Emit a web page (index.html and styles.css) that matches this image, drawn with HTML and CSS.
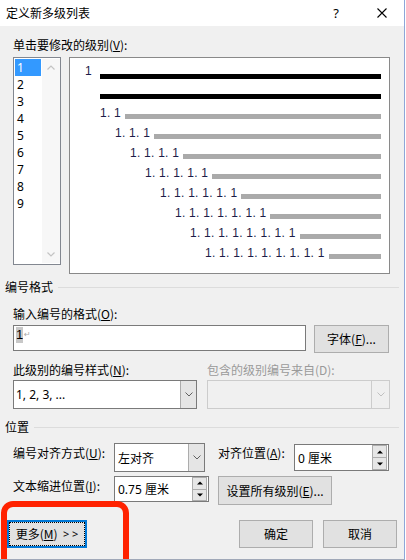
FILE: index.html
```
<!DOCTYPE html>
<html lang="zh-CN">
<head>
<meta charset="utf-8">
<title>定义新多级列表</title>
<link rel="stylesheet" href="styles.css">
</head>
<body>
<div class="dialog">
  <div class="titlebar">
    <span class="tb-title">定义新多级列表</span>
    <span class="tb-help">?</span>
    <span class="tb-close"><svg width="10" height="10" viewBox="0 0 10 10"><path d="M0.5 0.5L9.5 9.5M9.5 0.5L0.5 9.5" stroke="#000" stroke-width="1.1" fill="none"/></svg></span>
  </div>

  <div class="lbl first">单击要修改的级别(<u>V</u>):</div>

  <div class="list-row">
    <div class="levels">
      <div class="lv-items">
        <div class="lv sel">1</div>
        <div class="lv">2</div>
        <div class="lv">3</div>
        <div class="lv">4</div>
        <div class="lv">5</div>
        <div class="lv">6</div>
        <div class="lv">7</div>
        <div class="lv">8</div>
        <div class="lv">9</div>
      </div>
      <div class="lv-scroll">
        <svg width="8" height="5" viewBox="0 0 8 5"><path d="M0.5 4.5L4 1L7.5 4.5" stroke="#c4c4c4" stroke-width="1.2" fill="none"/></svg>
        <svg width="8" height="5" viewBox="0 0 8 5"><path d="M0.5 0.5L4 4L7.5 0.5" stroke="#c4c4c4" stroke-width="1.2" fill="none"/></svg>
      </div>
    </div>
    <div class="preview">
      <div class="pv-row"><span class="pv-num n1">1</span><span class="bar k"></span></div>
      <div class="pv-row cont"><span class="bar k"></span></div>
      <div class="pv-row lv2"><span class="pv-num">1. 1</span><span class="bar"></span></div>
      <div class="pv-row lv3"><span class="pv-num">1. 1. 1</span><span class="bar"></span></div>
      <div class="pv-row lv4"><span class="pv-num">1. 1. 1. 1</span><span class="bar"></span></div>
      <div class="pv-row lv5"><span class="pv-num">1. 1. 1. 1. 1</span><span class="bar"></span></div>
      <div class="pv-row lv6"><span class="pv-num">1. 1. 1. 1. 1. 1</span><span class="bar"></span></div>
      <div class="pv-row lv7"><span class="pv-num">1. 1. 1. 1. 1. 1. 1</span><span class="bar"></span></div>
      <div class="pv-row lv8"><span class="pv-num">1. 1. 1. 1. 1. 1. 1. 1</span><span class="bar"></span></div>
      <div class="pv-row lv9"><span class="pv-num">1. 1. 1. 1. 1. 1. 1. 1. 1</span><span class="bar"></span></div>
    </div>
  </div>

  <div class="sec sec1"><span class="sec-title">编号格式</span><span class="sec-line"></span></div>

  <div class="lbl in-lbl">输入编号的格式(<u>O</u>):</div>
  <div class="input-row">
    <div class="textbox"><span class="hl">1</span><span class="ret">↵</span></div>
    <div class="btn font-btn">字体(<u>F</u>)...</div>
  </div>

  <div class="lbl2-row">
    <span class="c1">此级别的编号样式(<u>N</u>):</span>
    <span class="c2 dis">包含的级别编号来自(D):</span>
  </div>
  <div class="combo-row">
    <div class="combo style-combo">
      <span class="combo-text latin">1, 2, 3, ...</span>
      <span class="combo-btn"><svg width="8" height="5" viewBox="0 0 8 5"><path d="M0.5 0.5L4 4L7.5 0.5" stroke="#606060" stroke-width="1" fill="none"/></svg></span>
    </div>
    <div class="combo dis-combo">
      <span class="combo-text"></span>
      <span class="combo-btn"><svg width="8" height="5" viewBox="0 0 8 5"><path d="M0.5 0.5L4 4L7.5 0.5" stroke="#c0c0c0" stroke-width="1" fill="none"/></svg></span>
    </div>
  </div>

  <div class="sec sec2"><span class="sec-title">位置</span><span class="sec-line"></span></div>

  <div class="pos-row r1">
    <span class="plbl">编号对齐方式(<u>U</u>):</span>
    <div class="combo align-combo">
      <span class="combo-text">左对齐</span>
      <span class="combo-btn"><svg width="8" height="5" viewBox="0 0 8 5"><path d="M0.5 0.5L4 4L7.5 0.5" stroke="#606060" stroke-width="1" fill="none"/></svg></span>
    </div>
    <span class="plbl2">对齐位置(<u>A</u>):</span>
    <div class="spin pos-spin">
      <span class="spin-text">0 厘米</span>
      <span class="spin-btns">
        <span class="sb"><svg width="6" height="4" viewBox="0 0 6 4"><path d="M0 3.5L3 0.5L6 3.5Z" fill="#000"/></svg></span>
        <span class="sb"><svg width="6" height="4" viewBox="0 0 6 4"><path d="M0 0.5L3 3.5L6 0.5Z" fill="#000"/></svg></span>
      </span>
    </div>
  </div>

  <div class="pos-row r2">
    <span class="plbl">文本缩进位置(<u>I</u>):</span>
    <div class="spin indent-spin">
      <span class="spin-text">0.75 厘米</span>
      <span class="spin-btns">
        <span class="sb"><svg width="6" height="4" viewBox="0 0 6 4"><path d="M0 3.5L3 0.5L6 3.5Z" fill="#000"/></svg></span>
        <span class="sb"><svg width="6" height="4" viewBox="0 0 6 4"><path d="M0 0.5L3 3.5L6 0.5Z" fill="#000"/></svg></span>
      </span>
    </div>
    <div class="btn all-btn">设置所有级别(<u>E</u>)...</div>
  </div>

  <div class="btm-row">
    <div class="btn more"><span class="focus">更多(<u>M</u>)&nbsp;&nbsp;<span class="arr">&gt; &gt;</span></span></div>
    <div class="btn ok">确定</div>
    <div class="btn cancel">取消</div>
  </div>

  <div class="mark"></div>
</div>
</body>
</html>
```
FILE: styles.css
```
* { box-sizing: border-box; }
html, body { margin: 0; padding: 0; }
body {
  width: 406px;
  height: 560px;
  background: #fff;
  font-family: "Noto Sans CJK SC", "Noto Sans", sans-serif;
  font-size: 12px;
  color: #000;
  overflow: hidden;
}
u { text-decoration: underline; text-underline-offset: 1px; }

.dialog {
  position: relative;
  width: 405px;
  height: 560px;
  background: #f0f0f0;
  border-right: 1px solid #8ea6d8;
  border-bottom: 1px solid #a0a8b8;
  overflow: hidden;
}

/* title bar */
.titlebar {
  height: 26px;
  background: #fff;
  display: flex;
  align-items: center;
  padding-left: 6px;
}
.tb-title { line-height: 16px; flex: 1; }
.tb-help {
  width: 20px;
  text-align: center;
  font-family: "Noto Sans", sans-serif;
  font-size: 13px;
  line-height: 16px;
  margin-right: 13px;
}
.tb-close {
  width: 45px;
  height: 26px;
  display: flex;
  align-items: center;
  justify-content: center;
}

/* labels */
.lbl {
  padding-left: 13px;
  height: 16px;
  line-height: 16px;
}
.lbl.first { margin-top: 11px; }
.lbl.in-lbl { margin-top: 11px; }

/* level list + preview */
.list-row {
  display: flex;
  align-items: flex-start;
  gap: 8px;
  padding-left: 13px;
  margin-top: 4px;
  height: 217px;
}
.levels {
  width: 48px;
  height: 208px;
  border: 1px solid #828790;
  background: #fff;
  display: flex;
  padding: 1px 0 1px 1px;
}
.lv-items { width: 26px; }
.lv {
  height: 17px;
  line-height: 17px;
  padding-left: 2px;
  font-family: "Noto Sans", sans-serif;
  font-size: 12px;
}
.lv.sel { background: #3399ff; color: #fff; }
.lv-scroll {
  width: 18px;
  margin-left: 1px;
  background: #f7f7f7;
  display: flex;
  flex-direction: column;
  justify-content: space-between;
  align-items: center;
  padding: 6px 0 6px 0;
}

.preview {
  width: 321px;
  height: 217px;
  border: 1px solid #898989;
  background: #fff;
  padding: 1px 8px 0 15px;
}
.pv-row {
  display: flex;
  align-items: flex-end;
  height: 20px;
}
.pv-num {
  font-family: "Liberation Sans", sans-serif;
  font-size: 12px;
  line-height: 12px;
  letter-spacing: 0.25px;
  color: #1c1c48;
  white-space: pre;
  margin-right: 4px;
}
.pv-num.n1 { width: 15px; margin-right: 0; margin-bottom: 2px; }
.bar { flex: 1; height: 5px; background: #aaaaaa; }
.bar.k { background: #000; }
.pv-row.cont { padding-left: 15px; }
.pv-row.lv2 { padding-left: 15px; }
.pv-row.lv3 { padding-left: 30px; }
.pv-row.lv4 { padding-left: 45px; }
.pv-row.lv5 { padding-left: 60px; }
.pv-row.lv6 { padding-left: 75px; }
.pv-row.lv7 { padding-left: 90px; }
.pv-row.lv8 { padding-left: 105px; }
.pv-row.lv9 { padding-left: 120px; }

/* section headers */
.sec {
  display: flex;
  align-items: center;
  height: 16px;
  padding: 0 5px;
}
.sec1 { margin-top: 5px; }
.sec2 { margin-top: 10px; }
.sec-title { line-height: 16px; }
.sec-line { flex: 1; height: 1px; background: #dcdcdc; margin-left: 5px; }

/* number format input */
.input-row {
  display: flex;
  align-items: flex-start;
  gap: 8px;
  padding-left: 13px;
  margin-top: 3px;
  height: 28px;
}
.textbox {
  width: 293px;
  height: 26px;
  border: 1px solid #7a7a7a;
  background: #fff;
  display: flex;
  align-items: flex-start;
  padding: 1px 0 0 2px;
}
.hl {
  background: #c8c8c8;
  font-family: "Liberation Sans", sans-serif;
  font-size: 13px;
  line-height: 16px;
  height: 16px;
  width: 7px;
  overflow: hidden;
}
.ret {
  font-family: "DejaVu Sans", sans-serif;
  font-size: 8px;
  color: #a8a8a8;
  line-height: 16px;
  margin-left: 1px;
}

.btn {
  background: #e1e1e1;
  border: 1px solid #adadad;
  display: flex;
  align-items: center;
  justify-content: center;
  line-height: 16px;
}
.font-btn { width: 75px; height: 28px; }

.lbl2-row {
  display: flex;
  padding-left: 13px;
  margin-top: 9px;
  height: 16px;
  line-height: 16px;
}
.c1 { width: 194px; }
.dis { color: #9a9a9a; }

.combo-row {
  display: flex;
  gap: 10px;
  padding-left: 13px;
  margin-top: 2px;
  height: 29px;
}
.combo {
  height: 29px;
  border: 1px solid #7a7a7a;
  background: #fff;
  display: flex;
}
.combo-text {
  flex: 1;
  display: flex;
  align-items: center;
  padding-left: 3px;
}
.combo-text.latin { font-family: "Noto Sans", sans-serif; padding-left: 2px; }
.combo-btn {
  width: 16px;
  background: #e5e5e5;
  border-left: 1px solid #acacac;
  display: flex;
  align-items: center;
  justify-content: center;
}
.style-combo { width: 184px; }
.dis-combo { width: 183px; background: #f0f0f0; border-color: #cccccc; }
.dis-combo .combo-btn { background: #efefef; border-left-color: #cccccc; width: 18px; }

/* position */
.pos-row {
  display: flex;
  align-items: flex-start;
  padding-left: 13px;
  height: 29px;
}
.r1 { margin-top: 8px; }
.r2 { margin-top: 4px; }
.plbl { width: 101px; margin-top: 2px; line-height: 16px; }
.plbl2 { width: 76px; margin-top: 2px; line-height: 16px; margin-left: 13px; }
.align-combo { width: 91px; }

.spin {
  width: 95px;
  height: 27px;
  border: 1px solid #7a7a7a;
  background: #fff;
  display: flex;
}
.pos-spin { margin-top: 1px; }
.indent-spin { height: 26px; }
.spin-text {
  flex: 1;
  display: flex;
  align-items: center;
  padding-left: 3px;
  font-family: "Noto Sans", "Noto Sans CJK SC", sans-serif;
}
.spin-btns {
  width: 15px;
  display: flex;
  flex-direction: column;
  margin-right: 1px;
}
.sb {
  flex: 1;
  background: #e6e6e6;
  border: 1px solid #adadad;
  display: flex;
  align-items: center;
  justify-content: center;
}
.sb + .sb { margin-top: -1px; }
.all-btn { width: 114px; height: 29px; margin-left: 9px; }

/* bottom buttons */
.btm-row {
  display: flex;
  margin-top: 15px;
  padding: 0 7px;
  height: 28px;
}
.more {
  width: 80px;
  height: 28px;
  border: 2px solid #0078d7;
  padding: 0;
  align-items: stretch;
}
.focus {
  flex: 1;
  border: 1px dotted #000;
  display: flex;
  align-items: center;
  justify-content: center;
}
.arr { font-family: "Noto Sans", sans-serif; font-size: 11px; }
.ok { width: 74px; height: 28px; margin-left: auto; }
.cancel { width: 74px; height: 28px; margin-left: 10px; }

/* red annotation frame drawn over the screenshot */
.mark {
  position: absolute;
  left: 1px;
  top: 501px;
  width: 128px;
  height: 90px;
  border: 6px solid #ff2200;
  border-radius: 12px;
}
```
